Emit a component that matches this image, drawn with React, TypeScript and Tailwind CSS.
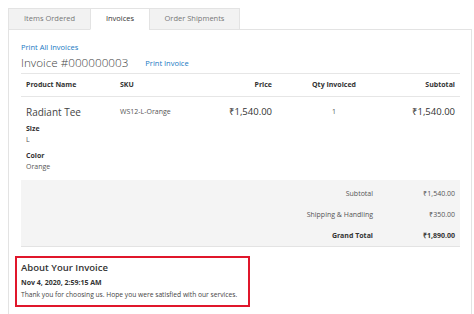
const font = { fontFamily: '"Open Sans", "Liberation Sans", sans-serif' }

const tabs = [
  { label: 'Items Ordered', w: 'w-[83px]', active: false },
  { label: 'Invoices', w: 'w-[60px]', active: true },
  { label: 'Order Shipments', w: 'w-[91px]', active: false },
]

const totals = [
  { label: 'Subtotal', value: '₹1,540.00', bold: false },
  { label: 'Shipping & Handling', value: '₹350.00', bold: false },
  { label: 'Grand Total', value: '₹1,890.00', bold: true },
]

export default function App() {
  return (
    <div
      className="w-[474px] h-[314px] overflow-hidden bg-white pt-[8px] pl-[8px] pr-[2px] text-[#333]"
      style={font}
    >
      <div className="flex relative z-10">
        {tabs.map((t) => (
          <div
            key={t.label}
            className={`${t.w} h-[22px] flex items-center justify-center text-[7.5px] border border-[#e3e3e3] -ml-px first:ml-0 ${
              t.active ? 'bg-white border-b-white text-[#333]' : 'bg-[#f2f2f2] text-[#777]'
            }`}
          >
            {t.label}
          </div>
        ))}
      </div>

      <div className="-mt-px border border-[#e3e3e3] border-b-0 h-[300px] pl-[12px] pr-[12px] pt-[12px]">
        <div className="text-[7.5px] text-[#1979c3] leading-[10px]">Print All Invoices</div>
        <div className="flex items-center mt-[1px] h-[20px]">
          <span className="text-[11.7px] font-light text-[#444]">Invoice #000000003</span>
          <span className="ml-[17px] text-[7.5px] text-[#1979c3] mt-[1px]">Print Invoice</span>
        </div>

        <div className="border-t border-[#e6e6e6] w-[439px]">
          <div className="grid grid-cols-[94px_100px_52px_124px_1fr] px-[5px] h-[23px] items-center text-[7px] font-bold border-b border-[#e6e6e6]">
            <div>Product Name</div>
            <div>SKU</div>
            <div className="text-right">Price</div>
            <div className="text-center">Qty Invoiced</div>
            <div className="text-right">Subtotal</div>
          </div>

          <div className="grid grid-cols-[94px_100px_52px_124px_1fr] px-[5px] pt-[8px] h-[83px]">
            <div>
              <div className="text-[10px] leading-[14px] text-[#444]">Radiant Tee</div>
              <div className="mt-[5px] text-[7px] font-bold leading-[10px]">Size</div>
              <div className="text-[7px] leading-[11px] text-[#555]">L</div>
              <div className="mt-[6px] text-[7px] font-bold leading-[10px]">Color</div>
              <div className="text-[7px] leading-[11px] text-[#555]">Orange</div>
            </div>
            <div className="text-[7px] leading-[14px] text-[#555]">WS12-L-Orange</div>
            <div className="text-right text-[9.5px] leading-[14px] whitespace-nowrap">₹1,540.00</div>
            <div className="text-center text-[7px] leading-[14px] text-[#555]">1</div>
            <div className="text-right text-[9.5px] leading-[14px] whitespace-nowrap">₹1,540.00</div>
          </div>

          <div className="bg-[#f4f4f4] border-b border-[#e3e3e3] h-[67px] pt-[4px] pr-[5px]">
            {totals.map((r) => (
              <div
                key={r.label}
                className={`grid grid-cols-[1fr_82px] h-[21px] items-center text-[7px] ${r.bold ? 'font-bold' : 'text-[#555]'}`}
              >
                <div className="text-right">{r.label}</div>
                <div className="text-right">{r.value}</div>
              </div>
            ))}
          </div>
        </div>

        <div className="mt-[9px] -ml-[6px] w-[235px] h-[51px] border-[2.5px] border-[#e0162b] pl-[4px] pt-[3px]">
          <div className="text-[9.5px] font-semibold leading-[14px] text-[#333]">About Your Invoice</div>
          <div className="text-[7px] font-bold leading-[13px] mt-[1px]">Nov 4, 2020, 2:59:15 AM</div>
          <div className="text-[6.7px] leading-[12px] text-[#444]">
            Thank you for choosing us. Hope you were satisfied with our services.
          </div>
        </div>
      </div>
    </div>
  )
}
